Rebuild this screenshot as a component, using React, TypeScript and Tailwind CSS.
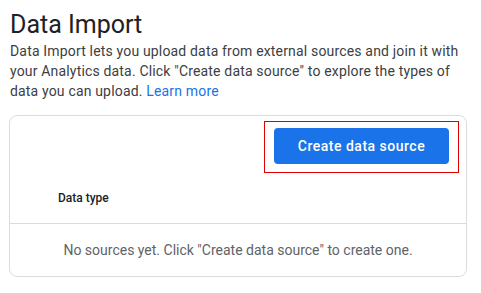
export default function App() {
  return (
    <div className="w-[481px] h-[293px] bg-white pl-[9px] pt-[9px] font-['Roboto',sans-serif]">
      <h1 className="text-[25px] leading-[32px] text-[#202124] font-['Roboto',sans-serif] pl-px">Data Import</h1>
      <p className="w-[462px] text-[14px] leading-[20px] tracking-[0.17px] text-[#3c4043] pl-px">
        Data Import lets you upload data from external sources and join it with your Analytics data. Click "Create data source" to explore the types of data you can upload.{" "}
        <a className="text-[#1a73e8]">Learn more</a>
      </p>

      <div className="mt-[14px] w-[458px] h-[162px] border border-[#dadce0] rounded-[8px] flex flex-col">
        {/* toolbar */}
        <div className="flex justify-end pt-[5px] pr-[7px]">
          <div className="border border-[#e00000] px-[9px] pt-[6px] pb-[8px]">
            <button className="w-[175px] h-[36px] rounded-[4px] bg-[#1a73e8] text-white text-[14px] font-medium tracking-[0.5px]">
              Create data source
            </button>
          </div>
        </div>

        {/* table header */}
        <div className="h-[51px] flex items-center pl-[48px] border-b border-[#dadce0]">
          <span className="text-[12px] font-medium text-[#202124]">Data type</span>
        </div>

        {/* empty state */}
        <div className="flex-1 flex items-center justify-center text-[14px] text-[#5f6368]">
          No sources yet. Click "Create data source" to create one.
        </div>
      </div>
    </div>
  );
}
